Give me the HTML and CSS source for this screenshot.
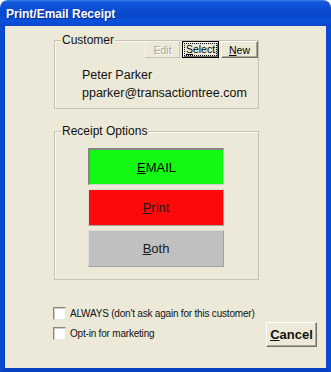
FILE: index.html
```html
<!DOCTYPE html>
<html>
<head>
<meta charset="utf-8">
<link rel="stylesheet" href="styles.css">
</head>
<body>
<div class="window">
  <div class="titlebar"><span class="title">Print/Email Receipt</span></div>
  <div class="frame">
    <div class="content">
      <div class="group customer">
        <span class="legend">Customer</span>
        <div class="toolbar">
          <button class="btn small disabled">Edit</button>
          <button class="btn small default"><span class="focus"><u>S</u>elect</span></button>
          <button class="btn small new"><u>N</u>ew</button>
        </div>
        <div class="info">
          <div>Peter Parker</div>
          <div>pparker@transactiontree.com</div>
        </div>
      </div>
      <div class="group receipt">
        <span class="legend">Receipt Options</span>
        <div class="options">
          <button class="opt email"><u>E</u>MAIL</button>
          <button class="opt print"><u>P</u>rint</button>
          <button class="opt both"><u>B</u>oth</button>
        </div>
      </div>
      <div class="footer">
        <div class="checks">
          <label class="check"><span class="box"></span>ALWAYS (don't ask again for this customer)</label>
          <label class="check"><span class="box"></span>Opt-in for marketing</label>
        </div>
        <button class="btn cancel"><u>C</u>ancel</button>
      </div>
    </div>
  </div>
</div>
</body>
</html>
```
FILE: styles.css
```css
html, body {
  margin: 0;
  padding: 0;
  background: #ffffff;
}
body {
  font-family: "Liberation Sans", Arial, sans-serif;
  color: #000;
}
.window {
  width: 331px;
  height: 372px;
  display: flex;
  flex-direction: column;
}
.titlebar {
  height: 26px;
  flex: none;
  border-radius: 8px 8px 0 0;
  background: linear-gradient(to bottom, #3d7fe8 0%, #1658dc 8%, #0a4ed4 30%, #0848cc 60%, #0a52dc 85%, #0844c4 100%);
  display: flex;
  align-items: center;
}
.title {
  color: #ffffff;
  font-weight: bold;
  font-size: 12px;
  padding-left: 6px;
  padding-top: 2px;
  text-shadow: 1px 1px 0 #0a2a8c;
}
.frame {
  flex: 1;
  border-left: 4px solid #0a4ad0;
  border-right: 5px solid #0a4ad0;
  border-bottom: 4px solid #0842c4;
  box-shadow: inset 1px 0 0 #0840b8;
  background: #ece9d8;
}
.content {
  padding: 14px 0 0 50px;
}
.group {
  position: relative;
  width: 205px;
  box-sizing: border-box;
  border: 1px solid #c7c4b4;
  box-shadow: inset 1px 1px 0 #f8f7f0;
}
.legend {
  position: absolute;
  left: 6px;
  top: -8px;
  font-size: 12px;
  line-height: 14px;
  background: #ece9d8;
  padding: 0 1px;
  color: #111;
}
.customer {
  padding-bottom: 6px;
}
.toolbar {
  display: flex;
  justify-content: flex-end;
  gap: 2px;
  height: 17px;
}
.btn {
  font-family: "Liberation Sans", Arial, sans-serif;
  background: #ece9d8;
  border: 1px solid;
  border-color: #ffffff #716f64 #716f64 #ffffff;
  box-shadow: inset -1px -1px 0 #aca899;
  padding: 0;
  margin: 0;
  color: #000;
  display: flex;
  align-items: center;
  justify-content: center;
}
.small {
  height: 17px;
  font-size: 10.5px;
}
.disabled {
  width: 35px;
  color: #aca899;
  text-shadow: 1px 1px 0 #ffffff;
  border-color: #f4f3ec #c9c6b8 #c9c6b8 #f4f3ec;
  box-shadow: none;
}
.default {
  width: 37px;
  border: 1px solid #000;
  box-shadow: inset 1px 1px 0 #ffffff, inset -1px -1px 0 #716f64;
}
.focus {
  outline: 1px dotted #000;
  outline-offset: 0;
  padding: 0 1px;
  line-height: 11px;
}
.new {
  width: 37px;
}
.info {
  margin-top: 8px;
  padding-left: 27px;
  font-size: 12.5px;
  line-height: 18px;
  color: #111;
}
.receipt {
  margin-top: 22px;
  padding: 16px 0 12px 33px;
}
.options {
  display: flex;
  flex-direction: column;
  gap: 4px;
}
.opt {
  width: 136px;
  height: 37px;
  margin: 0;
  padding: 0;
  font-family: "Liberation Sans", Arial, sans-serif;
  font-size: 13px;
  color: #1a1a1a;
  box-sizing: border-box;
  border: 1px solid;
  border-color: #dcdcdc #a4a4a4 #a4a4a4 #dcdcdc;
}
.email {
  background: #14f814;
  color: #000;
  border-width: 2px 1px 1px 2px;
  border-color: #858585 #d0d0d0 #d0d0d0 #858585;
}
.print {
  background: #fc0a0a;
}
.both {
  background: #c0c0c0;
}
.footer {
  margin-top: 23px;
  margin-left: -1px;
  padding-right: 9px;
  display: flex;
  justify-content: space-between;
  align-items: flex-start;
}
.checks {
  flex: none;
}
.check {
  display: flex;
  align-items: center;
  gap: 4px;
  height: 20px;
  font-size: 10px;
  white-space: nowrap;
  letter-spacing: -0.2px;
  color: #111;
}
.box {
  flex: none;
  width: 13px;
  height: 13px;
  box-sizing: border-box;
  background: #ffffff;
  border: 1px solid;
  border-color: #8a8878 #e8e6dc #e8e6dc #8a8878;
  box-shadow: inset 1px 1px 0 #cfcdc2;
}
.cancel {
  flex: none;
  width: 51px;
  height: 25px;
  margin-top: 19px;
  font-size: 13px;
  font-weight: bold;
  color: #111;
}
```
